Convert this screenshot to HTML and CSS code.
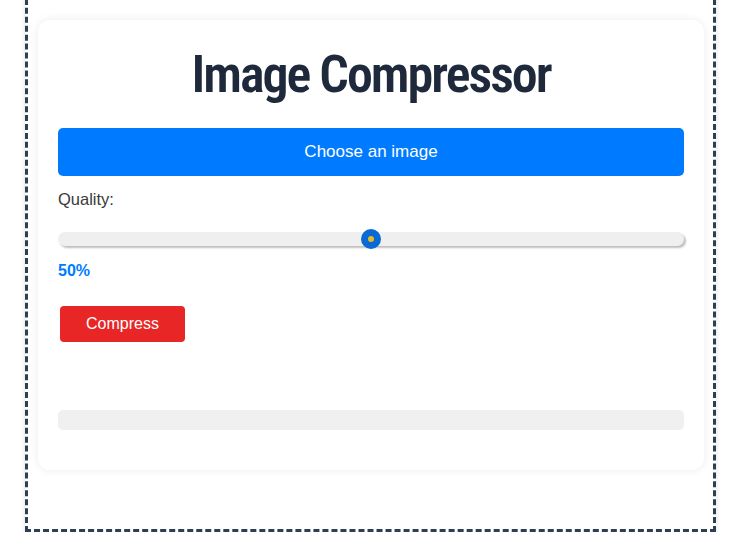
FILE: index.html
```html
<!DOCTYPE html>
<html lang="en">
<head>
  <meta charset="UTF-8" />
  <meta name="viewport" content="width=device-width, initial-scale=1.0"/>
  <title>Image Compressor</title>
  <link rel="stylesheet" href="styles.css">
</head>
<body>
  <div class="frame">
    <div class="container">
      <h1>Image Compressor</h1>
      <label class="file-btn" for="file-input">Choose an image</label>
      <input type="file" id="file-input" accept="image/*" />
      <p class="quality-label">Quality:</p>
      <input type="range" id="quality" min="0" max="100" value="50" />
      <p id="quality-value">50%</p>
      <button class="compress-btn">Compress</button>
      <div class="progress"><div class="progress-bar"></div></div>
    </div>
  </div>
</body>
</html>
```

FILE: styles.css
```css
body {
  margin: 0;
  padding: 0;
  background-color: #fff;
  font-family: "Liberation Sans", Arial, sans-serif;
}
.frame {
  box-sizing: border-box;
  width: 691px;
  margin: -10px 0 0 25px;
  padding: 27px 9px 59px 10px;
  border: 3px dashed #2f3e52;
  box-shadow: 0 0 4px rgba(0, 0, 0, 0.15);
}
.container {
  padding: 20px;
  background-color: #fff;
  border-radius: 12px;
  box-shadow: 0 0 10px rgba(0, 0, 0, 0.08);
}
h1 {
  margin: 0 0 18px;
  text-align: center;
  font-family: "Roboto Condensed", "Roboto", sans-serif;
  font-stretch: 75%;
  font-size: 52px;
  font-weight: 600;
  line-height: 70px;
  letter-spacing: -2px;
  color: #1e293b;
}
#file-input {
  display: none;
}
.file-btn {
  display: block;
  height: 48px;
  line-height: 48px;
  text-align: center;
  background-color: #007bff;
  color: #fff;
  font-size: 17px;
  border-radius: 5px;
  cursor: pointer;
}
.quality-label {
  margin: 13px 0 0;
  font-size: 16.5px;
  line-height: 20px;
  color: #3a3a3a;
}
#quality {
  -webkit-appearance: none;
  appearance: none;
  display: block;
  width: 626px;
  height: 14px;
  margin: 23px 0 0;
  background: #efefef;
  border-radius: 7px;
  box-shadow: 2px 2px 2px rgba(0, 0, 0, 0.25);
  outline: none;
}
#quality::-webkit-slider-thumb {
  -webkit-appearance: none;
  appearance: none;
  box-sizing: border-box;
  width: 20px;
  height: 20px;
  border-radius: 50%;
  border: 7px solid #0a6ad4;
  background: #e9b824;
  cursor: pointer;
}
#quality-value {
  margin: 15px 0 0;
  font-size: 16px;
  line-height: 20px;
  font-weight: 700;
  color: #007bff;
}
.compress-btn {
  display: block;
  margin: 25px 0 0 2px;
  width: 125px;
  height: 36px;
  padding: 0;
  border: none;
  border-radius: 4px;
  background-color: #e82626;
  color: #fff;
  font-family: "Liberation Sans", Arial, sans-serif;
  font-size: 16px;
  cursor: pointer;
}
.progress {
  height: 20px;
  margin: 68px 0 20px;
  background-color: #f0f0f0;
  border-radius: 5px;
  overflow: hidden;
}
.progress-bar {
  width: 0;
  height: 100%;
  background-color: #007bff;
}
```
